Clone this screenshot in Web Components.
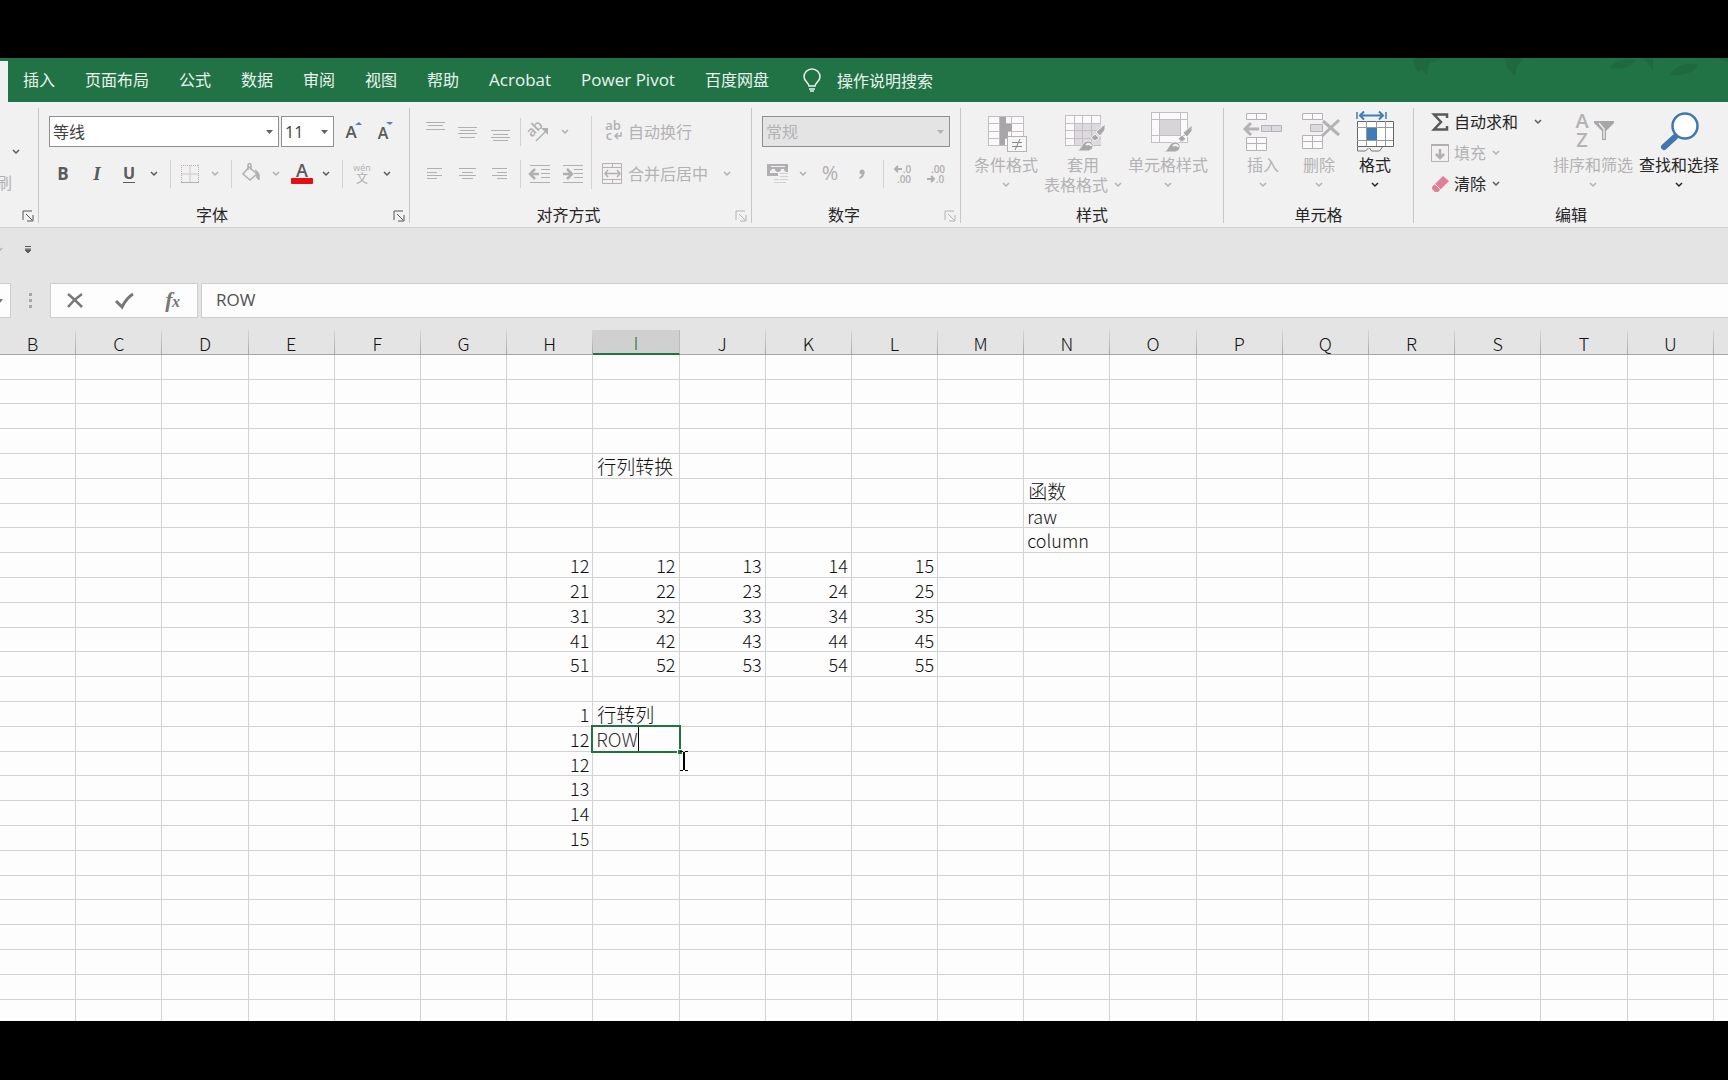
<!DOCTYPE html>
<html lang="zh-CN">
<head>
<meta charset="utf-8">
<title>Excel</title>
<style>
  html, body { height: 100%; }
  body {
    box-sizing: border-box;
    margin: 0;
    padding: 58px 0 59px;
    background: #000;
    display: flex;
    flex-direction: column;
    overflow: hidden;
    color: #262626;
    font: 16px/20px "Open Sans", "Noto Sans CJK SC", sans-serif;
  }
</style>
</head>
<body>
<excel-tabs></excel-tabs>
<excel-ribbon></excel-ribbon>
<quick-bar></quick-bar>
<formula-bar></formula-bar>
<sheet-grid></sheet-grid>

<script>
const svg = (w, h, body) =>
  `<svg width="${w}" height="${h}" viewBox="0 0 ${w} ${h}" overflow="visible" fill="none" stroke="currentColor" aria-hidden="true">${body}</svg>`;
const glyph = (x, y, size, text, extra = '') =>
  `<text x="${x}" y="${y}" font-size="${size}" text-anchor="middle" fill="currentColor" stroke="none" ${extra}>${text}</text>`;

// horizontal strokes given as [x1, x2, y]
const lines = list => `<path d="${list.map(([a, b, y]) => `M${a} ${y}H${b}`).join('')}"/>`;

const brush = `
  <path d="M42 14 33 22l4 4 5-6z" fill="#a8a8a8" stroke="#f1f1f1"/>
  <path d="M32 24l4 4-4 3-4-3z" fill="#a8a8a8" stroke="#f1f1f1"/>
  <path d="M14 41c5-2 5-11 12-10 6 1 5 8 0 10z" fill="#a8a8a8" stroke="#f1f1f1"/>
  <path d="M23 35c2-2 5-1 5 1" stroke="#f1f1f1" stroke-width="2"/>`;

const icons = {
  chev: svg(8, 6, '<path d="M1 1l3 3 3-3" stroke-width="1.500"/>'),
  launcher: svg(12, 12, '<path d="M1 10V1h9M4 4l6 6M11 5v6H5" />'),
  grow: svg(24, 24, glyph(9, 18, 17, 'A', 'font-weight="600"') + '<path d="M13 5h7l-3-3z" fill="#5b7fa8" stroke="none"/>'),
  shrink: svg(24, 24, glyph(8, 19, 16, 'A', 'font-weight="600"') + '<path d="M11 2h7l-3 3z" fill="#5b7fa8" stroke="none"/>'),
  bold: svg(24, 24, glyph(12, 18, 17, 'B', 'font-weight="700"')),
  italic: svg(24, 24, glyph(13, 18, 19, 'I', 'font-weight="700" font-style="italic" font-family="Liberation Serif, serif"')),
  underline: svg(24, 24, glyph(12, 17, 16, 'U', 'font-weight="700"') + '<path d="M6 20.500h12"/>'),
  borders: svg(24, 24, '<path d="M3.500 3v18M20.500 3v18M3 3.500h18" stroke-dasharray="1 1"/><path d="M12 3v18M3 12h18" stroke="#cfc4cb"/><path d="M3 20.500h18"/>'),
  fill: svg(24, 24, '<path d="M10 5l8 7-7 6-7-6zM9 8V3c0-2 3-2 3 0v5" stroke-width="1.500"/><path d="M16 8c4 2 5 5 4 10-1-1-4-3-2-7z" fill="currentColor"/>'),
  fontcolor: svg(24, 24, glyph(13, 15, 18, 'A', 'font-weight="600"') + '<rect x="2" y="16" width="22" height="6" rx="1" fill="#e30f13" stroke="none"/>'),
  pinyin: svg(24, 24, glyph(12, 9, 9, 'wén') + glyph(12, 21, 12, '文')),

  atop: svg(24, 24, lines([[3, 22, 2.5], [5, 20, 5.5], [3, 22, 9.5]])),
  amid: svg(24, 24, lines([[2, 21, 7.5], [4, 19, 10.5], [2, 21, 13.5], [4, 19, 17.5]])),
  abot: svg(24, 24, lines([[2, 21, 10.5], [4, 19, 14.5], [2, 21, 17.5], [4, 19, 20.5]])),
  aleft: svg(24, 24, lines([[4, 19, 6.5], [4, 14, 10.5], [4, 19, 13.5], [4, 14, 16.5]])),
  acenter: svg(24, 24, lines([[3, 20, 6.5], [6, 17, 10.5], [3, 20, 13.5], [6, 17, 16.5]])),
  aright: svg(24, 24, lines([[3, 18, 6.5], [8, 18, 10.5], [3, 18, 13.5], [8, 18, 16.5]])),
  orient: svg(24, 24, `<g transform="rotate(-45 9 11)">${glyph(9, 12, 14, 'ab', 'font-weight="600"')}</g><path d="M8 21 18 11" stroke-width="1.500"/><path d="M13 8h7v7z" fill="currentColor" stroke="none"/>`),
  outdent: svg(24, 24, lines([[2, 22, 3.5], [13, 22, 7.5], [13, 22, 11.5], [13, 22, 15.5], [2, 22, 20.5]]) + '<path d="M11 12H4M7 7l-5 5 5 5" stroke-width="2.500"/>'),
  indent: svg(24, 24, lines([[2, 22, 3.5], [13, 22, 7.5], [13, 22, 11.5], [13, 22, 15.5], [2, 22, 20.5]]) + '<path d="M2 12h7M6 7l5 5-5 5" stroke-width="2.500"/>'),
  wrap: svg(24, 24, glyph(13, 10, 13, 'ab', 'font-weight="600"') + glyph(9, 20, 13, 'c', 'font-weight="600"') + '<path d="M21 12v4h-6m3-3-3 3 3 3" stroke-width="1.500"/>'),
  merge: svg(24, 24, '<path d="M2.500 1.500h19v20h-19zM2 5.500h20M2 17.500h20M12.500 1v4M12.500 18v4" stroke="#b8b0b5"/><path d="M5 11.500h15M8 8l-3 3.500 3 3.500M17 8l3 3.500-3 3.500" stroke-width="1.500"/>'),

  money: svg(24, 24, '<path d="M1 2h21v8h-2a3 3 0 0 1-2-3h-3a3 3 0 0 1-6 0H6a3 3 0 0 1-2 2v2h8v3H1z" fill="currentColor" stroke="none"/><circle cx="12" cy="7" r="2.500" fill="currentColor" stroke="none"/><path d="M5 4.500h14" stroke="#f1f1f1"/><path d="M14 11.500h8M14 14.500h8M14 17.500h8M8 17.500h5M8 20.500h12" stroke-opacity=".5"/>'),
  percent: svg(24, 24, glyph(14, 18, 20, '%')),
  comma: svg(24, 24, '<circle cx="13" cy="10" r="2.500" fill="currentColor" stroke="none"/><path d="M14.500 10c0 3-1 5-4 6" stroke-width="2"/>'),
  incdec: svg(24, 24, glyph(16, 11, 10, '.0', 'font-weight="600"') + glyph(13, 21, 10, '.00', 'font-weight="600"') + '<path d="M11 7H4m3-3L4 7l3 3" stroke-width="2"/>'),
  decdec: svg(24, 24, glyph(14, 11, 10, '.00', 'font-weight="600"') + glyph(16, 21, 10, '.0', 'font-weight="600"') + '<path d="M3 17h7m-3-3 3 3-3 3" stroke-width="2"/>'),

  cond: svg(44, 42, `<g stroke="#c5bcc4"><rect x="4.500" y="4.500" width="35" height="29" fill="#fafafa"/><path d="M4 11.500h36M4 19.500h36M4 26.500h36M15.500 4v29M27.500 4v29"/></g>
    <path d="M16 5h6v7h-6zM16 12h12v7H16zM16 19h8v7h-8zM16 26h5v7h-5z" fill="#a8a6a8" stroke="none"/>
    <rect x="23.500" y="24.500" width="19" height="15" fill="#f6f6f6"/>
    <path d="M28 30.500h10M28 34.500h10M36 27l-5 11" stroke="#888"/>`),
  tablefmt: svg(44, 42, `<g stroke="#c5bcc4"><rect x="4.500" y="3.500" width="35" height="30" fill="#fafafa"/><path d="M13 11h27v22H13z" fill="#dcdade" stroke="none"/><path d="M4 11.500h36M4 18.500h36M4 26.500h36M13.500 3v30M21.500 3v30M30.500 3v30"/></g><g transform="translate(2 -2)">${brush}</g>`),
  cellstyle: svg(44, 42, `<g stroke="#c5bcc4"><rect x="5.500" y=".500" width="36" height="30" fill="#fafafa"/><path d="M13 8h21v15H13z" fill="#d8d5d9" stroke="none"/><path d="M5 7.500h37M5 23.500h37M13.500 0v31M34.500 0v31"/></g><g transform="translate(4 -1)">${brush}</g>`),
  insert: svg(44, 42, `<g stroke="#b9b0b7"><path d="M5.500 1.500h20v6h-20zM15.500 1v7M5.500 25.500h20v13h-20zM5 31.500h21M15.500 25v14" fill="#fafafa"/><path d="M20.500 13.500h20v6h-20zM30.500 13v7" fill="#dcdade"/></g><path d="M18 17H4M10 11l-6 6 6 6" stroke-width="3"/>`),
  remove: svg(44, 42, `<g stroke="#b9b0b7"><path d="M5.500 1.500h20v6h-20zM15.500 1v7M5.500 23.500h20v13h-20zM5 29.500h21M15.500 23v14" fill="#fafafa"/><path d="M13.500 12.500h12v7h-12z" fill="#dcdade"/></g><path d="M26 9l16 14M42 8 25 24" stroke-width="3"/>`),
  format: svg(44, 42, `<g stroke="#3f7cb8"><path d="M4 0v7M33 0v7" stroke-width="1.500"/><path d="M7 3.500h23M11-.500l-4 4 4 4M26-.500l4 4-4 4" stroke-width="2"/></g>
    <path d="M4.500 9.500h36v25h-36z" fill="#fff" stroke="#666"/><path d="M4 15.500h36M4 28.500h36M13.500 9v25M23.500 9v25M32.500 9v25" stroke="#999"/>
    <path d="M14 16h10v12H14z" fill="#3f7cb8" stroke="none"/><path d="M4.500 35v4h8l3-3M16.500 36l2 3h8l3-4" stroke="#777"/>`),

  sum: svg(20, 20, '<path d="M17 6V2.500H4l7 7.500-7 7.500h13V14" stroke-width="2.500"/>'),
  down: svg(20, 20, '<path d="M1.500 1.500h17v17h-17z" stroke="#b9b0b7"/><path d="M1 2h18" stroke-width="2"/><path d="M10 6v9M6 11l4 4 4-4" stroke-width="2.500"/>'),
  eraser: svg(20, 20, '<path d="M2 13 13 2l6 5L8 18H5l-3-3z" fill="#e08098" stroke="none"/><path d="M5 10l6 6" stroke="#f1f1f1"/>'),
  sort: svg(44, 42, glyph(11, 16, 20, 'A', 'font-weight="600"') + glyph(11, 35, 20, 'Z', 'font-weight="600"') + '<path d="M23 9h20v2l-8 8v9h-4v-9l-8-8z" fill="#a8a6a8" stroke="none"/><path d="M28 11l5 6v10" stroke="#ececec" stroke-width="1.500"/>'),
  find: svg(44, 42, '<path d="M18 25 7 35" stroke="#3f78b0" stroke-width="6" stroke-linecap="round"/><circle cx="28" cy="14" r="12.500" fill="#fff" stroke="#3f78b0" stroke-width="2.500"/>'),

  bulb: svg(18, 24, '<path d="M6 17c0-3-5-5-5-9a8 8 0 0 1 16 0c0 4-5 6-5 9zM6 20h6M7 22h4" stroke-width="1.500"/>'),
  custom: svg(8, 10, '<path d="M1 1.500h6M1 4h6"/><path d="M1 5h6L4 8z" fill="currentColor"/>'),
  cancel: svg(18, 16, '<path d="M2 1c5 4 9 8 14 13M16 1C10 5 6 9 2 14" stroke-width="2.500"/>'),
  enter: svg(20, 16, '<path d="M2 8l6 6C11 8 14 4 19 1" stroke-width="3"/>'),
  fx: svg(22, 24, glyph(7, 18, 22, 'f', 'font-style="italic" font-weight="700" font-family="Liberation Serif, serif"') + glyph(14, 18, 16, 'x', 'font-style="italic" font-weight="700" font-family="Liberation Serif, serif"'))
};

// Icon button, with an optional label in its slot
class ToolButton extends HTMLElement {
  connectedCallback() {
    this.attachShadow({ mode: 'open' });
    const off = this.hasAttribute('off') ? 'disabled' : '';
    const label = this.getAttribute('label');
    this.shadowRoot.innerHTML = `
      <style>
        :host { display: block; flex: none; }
        button {
          display: flex;
          align-items: center;
          justify-content: center;
          gap: 4px;
          width: 32px;
          height: 28px;
          padding: 0;
          border: 0;
          background: none;
          font: inherit;
          color: #5a5a5a;
          white-space: nowrap;
        }
        button:disabled { color: #b1afb1; }
        svg { display: block; flex: none; }
        :host([icon="chev"]) button { width: 16px; }
        :host([text]) button { width: auto; }
        span { color: #262626; }
        button:disabled span { color: #b4b2b4; }
      </style>
      <button type="button" ${off} ${label ? `aria-label="${label}"` : ''}>${icons[this.getAttribute('icon')]}${this.hasAttribute('text') ? '<span><slot></slot></span>' : ''}</button>
    `;
  }
}
customElements.define('tool-button', ToolButton);

// Tall ribbon button: picture, caption, then a second line ending in an arrow
class BigButton extends HTMLElement {
  connectedCallback() {
    this.attachShadow({ mode: 'open' });
    const off = this.hasAttribute('off') ? 'disabled' : '';
    this.shadowRoot.innerHTML = `
      <style>
        :host { display: block; flex: none; }
        button {
          display: flex;
          flex-direction: column;
          align-items: center;
          min-width: var(--big-width, 64px);
          padding: 4px 0 0;
          border: 0;
          background: none;
          font: inherit;
          color: #262626;
          white-space: nowrap;
        }
        button:disabled { color: #b4b2b4; }
        svg { display: block; }
        .caption { margin-top: 1px; height: 20px; }
        .more { display: flex; align-items: center; gap: 6px; height: 20px; }
      </style>
      <button type="button" ${off}>
        ${icons[this.getAttribute('icon')]}
        <span class="caption"><slot></slot></span>
        <span class="more"><slot name="second"></slot>${icons.chev}</span>
      </button>
    `;
  }
}
customElements.define('big-button', BigButton);

class DropBox extends HTMLElement {
  connectedCallback() {
    this.attachShadow({ mode: 'open' });
    const off = this.hasAttribute('off') ? 'disabled' : '';
    this.shadowRoot.innerHTML = `
      <style>
        :host { display: grid; align-items: center; height: 31px; }
        select {
          grid-area: 1 / 1;
          appearance: none;
          box-sizing: border-box;
          width: 100%;
          height: 31px;
          padding: 0 3px;
          border: 1px solid #8f8f8f;
          border-radius: 0;
          background: #fff;
          color: #404040;
          font: inherit;
        }
        select:disabled { background: #e4e4e4; color: #b4b2b4; opacity: 1; }
        svg { grid-area: 1 / 1; justify-self: end; margin-right: 6px; color: #606060; pointer-events: none; }
        :host([off]) svg { color: #b4b2b4; }
      </style>
      <select aria-label="${this.getAttribute('label')}" ${off}><option>${this.getAttribute('value')}</option></select>
      <svg width="7" height="4" viewBox="0 0 7 4"><path d="M0 0h7L3.500 4z" fill="currentColor"/></svg>
    `;
  }
}
customElements.define('drop-box', DropBox);

class RibbonGroup extends HTMLElement {
  connectedCallback() {
    this.attachShadow({ mode: 'open' });
    const name = this.getAttribute('name') || '';
    const launcher = this.getAttribute('launcher');
    this.shadowRoot.innerHTML = `
      <style>
        :host {
          display: flex;
          flex-direction: column;
          justify-content: space-between;
          min-width: 0;
          box-sizing: border-box;
          border-right: 1px solid #c6c6c6;
        }
        :host(:last-child) { border-right: 0; }
        footer { display: flex; align-items: center; height: 16px; }
        .name { flex: 1; text-align: center; line-height: 16px; }
        button { width: 24px; padding: 0 0 0 8px; border: 0; background: none; color: #555; display: flex; margin-top: 2px; }
        button:disabled { color: #b4b2b4; }
      </style>
      <slot></slot>
      <footer>
        <span class="name">${name}</span>
        ${launcher ? `<button type="button" aria-label="${name}设置" ${launcher === 'off' ? 'disabled' : ''}>${icons.launcher}</button>` : ''}
      </footer>
    `;
  }
}
customElements.define('ribbon-group', RibbonGroup);

class ExcelTabs extends HTMLElement {
  connectedCallback() {
    this.attachShadow({ mode: 'open' });
    const tabs = ['插入', '页面布局', '公式', '数据', '审阅', '视图', '帮助', 'Acrobat', 'Power Pivot', '百度网盘'];
    this.shadowRoot.innerHTML = `
      <style>
        :host { display: flex; height: 44px; background: #217346; color: #e9f5ee; flex: none; }
        .active { width: 8px; margin-top: 3px; background: #f1f1f1; }
        nav { display: flex; align-items: center; gap: 30px; padding: 0 34px 0 15px; white-space: nowrap; }
        a { color: inherit; text-decoration: none; }
        .latin { font-size: 17px; }
        .search {
          display: flex;
          align-items: center;
          gap: 16px;
          padding: 2px 0 0;
          border: 0;
          background: none;
          color: inherit;
          font: inherit;
          white-space: nowrap;
        }
        .leaves { margin-left: auto; flex: none; }
      </style>
      <div class="active"></div>
      <nav>${tabs.map(t => `<a href="#" class="${/[a-z]/.test(t) ? 'latin' : ''}">${t}</a>`).join('')}</nav>
      <button class="search" type="button">${icons.bulb}<span>操作说明搜索</span></button>
      <svg class="leaves" width="320" height="20" viewBox="0 0 320 20" fill="#1f693f" aria-hidden="true">
        <path d="M5 0h28c-3 5-8 2-12 6l-2 11-5-5-5 2zM96 0h20l-7 8-2 10-8-8zM202 10c6-10 16-7 26-9-3 8-14 11-26 9zM235 0h10v12zM262 17c6-9 16-14 28-10-4 8-14 11-28 10zM310 0h10v4z"/>
      </svg>
    `;
  }
}
customElements.define('excel-tabs', ExcelTabs);

class ExcelRibbon extends HTMLElement {
  connectedCallback() {
    this.attachShadow({ mode: 'open' });
    this.shadowRoot.innerHTML = `
      <style>
        :host {
          display: grid;
          grid-template-columns: 39fr 371fr 342fr 209fr 263fr 190fr 314fr;
          flex: none;
          height: 126px;
          box-sizing: border-box;
          padding: 6px 0 4px;
          background: #f1f1f1;
          border-bottom: 1px solid #cfcfcf;
        }
        .row { display: flex; align-items: center; gap: 1px; height: 31px; }
        .rows { display: flex; flex-direction: column; gap: 11px; padding: 8px 0 0 8px; }
        .block { display: flex; flex-direction: column; gap: 11px; }
        .blocks { display: flex; padding: 8px 0 0 9px; }
        .big { display: flex; gap: 6px; padding-left: 13px; }
        .cells { --big-width: 56px; gap: 0; padding-left: 11px; }
        .stack { display: flex; flex-direction: column; gap: 3px; }
        .stack .row { height: 28px; }
        .stack tool-button { margin-right: 1px; }
        .edit { display: flex; gap: 6px; padding-left: 16px; }
        .sep { width: 1px; height: 28px; background: #d2d2d2; margin: 0 2px 0 var(--sep-before, 2px); }
        .tall { height: auto; margin: 0 8px 0 2px; background: #d2d2d2; width: 1px; }
        .font { --sep-before: 7px; }
        .number { --sep-before: 5px; padding-left: 10px; }
        .face { flex: none; width: 230px; margin-left: 2px; }
        .size { flex: none; width: 53px; margin: 0 3px 0 1px; }
        .format { width: 188px; }
        .clip { display: flex; flex-direction: column; align-items: flex-start; gap: 7px; padding: 30px 0 0 8px; color: #b4b2b4; overflow: hidden; }
        .clip span { margin-left: -12px; }
        .push { margin-left: 10px; }
      </style>

      <ribbon-group launcher="on">
        <div class="clip">
          <tool-button icon="chev" label="粘贴选项"></tool-button>
          <span>刷</span>
        </div>
      </ribbon-group>

      <ribbon-group name="字体" launcher="on">
        <div class="rows font">
          <div class="row">
            <drop-box class="face" label="字体" value="等线"></drop-box>
            <drop-box class="size" label="字号" value="11"></drop-box>
            <tool-button icon="grow" label="增大字号"></tool-button>
            <tool-button icon="shrink" label="减小字号"></tool-button>
          </div>
          <div class="row">
            <tool-button icon="bold" label="加粗"></tool-button>
            <tool-button icon="italic" label="倾斜"></tool-button>
            <tool-button icon="underline" label="下划线"></tool-button>
            <tool-button icon="chev" label="下划线选项"></tool-button>
            <i class="sep"></i>
            <tool-button off icon="borders" label="边框"></tool-button>
            <tool-button off icon="chev" label="边框选项"></tool-button>
            <i class="sep"></i>
            <tool-button off icon="fill" label="填充颜色"></tool-button>
            <tool-button off icon="chev" label="填充颜色选项"></tool-button>
            <tool-button icon="fontcolor" label="字体颜色"></tool-button>
            <tool-button icon="chev" label="字体颜色选项"></tool-button>
            <i class="sep"></i>
            <tool-button off icon="pinyin" label="拼音"></tool-button>
            <tool-button icon="chev" label="拼音选项"></tool-button>
          </div>
        </div>
      </ribbon-group>

      <ribbon-group name="对齐方式" launcher="off">
        <div class="blocks">
          <div class="block">
            <div class="row">
              <tool-button off icon="atop" label="顶端对齐"></tool-button>
              <tool-button off icon="amid" label="垂直居中"></tool-button>
              <tool-button off icon="abot" label="底端对齐"></tool-button>
              <i class="sep"></i>
              <tool-button off icon="orient" label="方向"></tool-button>
              <tool-button off icon="chev" label="方向选项"></tool-button>
            </div>
            <div class="row">
              <tool-button off icon="aleft" label="左对齐"></tool-button>
              <tool-button off icon="acenter" label="居中"></tool-button>
              <tool-button off icon="aright" label="右对齐"></tool-button>
              <i class="sep"></i>
              <tool-button off icon="outdent" label="减少缩进"></tool-button>
              <tool-button off icon="indent" label="增加缩进"></tool-button>
            </div>
          </div>
          <i class="tall"></i>
          <div class="block">
            <div class="row"><tool-button off text icon="wrap">自动换行</tool-button></div>
            <div class="row">
              <tool-button off text icon="merge">合并后居中</tool-button>
              <tool-button off class="push" icon="chev" label="合并选项"></tool-button>
            </div>
          </div>
        </div>
      </ribbon-group>

      <ribbon-group name="数字" launcher="off">
        <div class="rows number">
          <div class="row"><drop-box off class="format" label="数字格式" value="常规"></drop-box></div>
          <div class="row">
            <tool-button off icon="money" label="会计数字格式"></tool-button>
            <tool-button off icon="chev" label="会计格式选项"></tool-button>
            <tool-button off icon="percent" label="百分比样式"></tool-button>
            <tool-button off icon="comma" label="千位分隔样式"></tool-button>
            <i class="sep"></i>
            <tool-button off icon="incdec" label="增加小数位数"></tool-button>
            <tool-button off icon="decdec" label="减少小数位数"></tool-button>
          </div>
        </div>
      </ribbon-group>

      <ribbon-group name="样式">
        <div class="big">
          <big-button off icon="cond">条件格式</big-button>
          <big-button off icon="tablefmt">套用<span slot="second">表格格式</span></big-button>
          <big-button off icon="cellstyle">单元格样式</big-button>
        </div>
      </ribbon-group>

      <ribbon-group name="单元格">
        <div class="big cells">
          <big-button off icon="insert">插入</big-button>
          <big-button off icon="remove">删除</big-button>
          <big-button icon="format">格式</big-button>
        </div>
      </ribbon-group>

      <ribbon-group name="编辑">
        <div class="edit">
          <div class="stack">
            <div class="row">
              <tool-button text icon="sum">自动求和</tool-button>
              <tool-button class="push" icon="chev" label="求和选项"></tool-button>
            </div>
            <div class="row">
              <tool-button off text icon="down">填充</tool-button>
              <tool-button off icon="chev" label="填充选项"></tool-button>
            </div>
            <div class="row">
              <tool-button text icon="eraser">清除</tool-button>
              <tool-button icon="chev" label="清除选项"></tool-button>
            </div>
          </div>
          <big-button off icon="sort">排序和筛选</big-button>
          <big-button icon="find">查找和选择</big-button>
        </div>
      </ribbon-group>
    `;
  }
}
customElements.define('excel-ribbon', ExcelRibbon);

class QuickBar extends HTMLElement {
  connectedCallback() {
    this.attachShadow({ mode: 'open' });
    this.shadowRoot.innerHTML = `
      <style>
        :host { display: flex; align-items: center; flex: none; height: 55px; box-sizing: border-box; padding-bottom: 12px; background: #e4e4e4; overflow: hidden; }
        tool-button { margin-left: -9px; }
        tool-button + tool-button { margin-left: 5px; }
      </style>
      <tool-button off icon="chev" label="恢复选项"></tool-button>
      <tool-button icon="custom" label="自定义快速访问工具栏"></tool-button>
    `;
  }
}
customElements.define('quick-bar', QuickBar);

class FormulaBar extends HTMLElement {
  connectedCallback() {
    this.attachShadow({ mode: 'open' });
    this.shadowRoot.innerHTML = `
      <style>
        :host { display: flex; flex: none; height: 35px; background: #e4e4e4; color: #777; }
        .name, .tools, input { box-sizing: border-box; border: 1px solid #cdcdcd; background: #fdfdfd; }
        .name { width: 11px; border-left: 0; display: flex; align-items: center; }
        .dots { width: 39px; display: flex; align-items: center; justify-content: center; }
        .tools { display: flex; width: 148px; }
        button { flex: 1; display: flex; align-items: center; justify-content: center; padding: 0; border: 0; background: none; color: #777; font: inherit; }
        input {
          flex: 1;
          min-width: 0;
          margin-left: 3px;
          padding: 0 14px 2px;
          border-right: 0;
          border-radius: 0;
          font: inherit;
          font-size: 17px;
          color: #505050;
        }
      </style>
      <div class="name"><svg width="3" height="4" viewBox="0 0 3 4"><path d="M0 0h3L0 4z" fill="#777"/></svg></div>
      <div class="dots"><svg width="3" height="15" viewBox="0 0 3 15" fill="#a6a6a6"><path d="M0 0h3v3H0zM0 6h3v3H0zM0 12h3v3H0z"/></svg></div>
      <div class="tools">
        <button type="button" aria-label="取消">${icons.cancel}</button>
        <button type="button" aria-label="输入">${icons.enter}</button>
        <button type="button" aria-label="插入函数">${icons.fx}</button>
      </div>
      <input aria-label="编辑栏" value="ROW">
    `;
  }
}
customElements.define('formula-bar', FormulaBar);

class SheetGrid extends HTMLElement {
  connectedCallback() {
    this.attachShadow({ mode: 'open' });
    const cols = [...'BCDEFGHIJKLMNOPQRSTU', ''];
    const cells = {
      I5: '行列转换', N6: '函数', N7: 'raw', N8: 'column',
      H15: 1, I15: '行转列', H16: 12, H17: 12, H18: 13, H19: 14, H20: 15
    };
    const block = [
      [12, 12, 13, 14, 15],
      [21, 22, 23, 24, 25],
      [31, 32, 33, 34, 35],
      [41, 42, 43, 44, 45],
      [51, 52, 53, 54, 55]
    ];
    block.forEach((line, r) => line.forEach((v, c) => { cells['HIJKL'[c] + (9 + r)] = v; }));

    const cell = (col, row) => {
      if (col + row === 'I16') return '<td class="editing"><cell-editor value="ROW"></cell-editor></td>';
      const v = cells[col + row];
      if (v === undefined) return '<td></td>';
      if (typeof v === 'number') return `<td class="num">${v}</td>`;
      return `<td class="${/[a-z]/.test(v) ? '' : 'han'}">${v}</td>`;
    };

    let body = '';
    for (let row = 1; row <= 27; row++) {
      body += `<tr>${cols.map(c => cell(c, row)).join('')}</tr>`;
    }

    this.shadowRoot.innerHTML = `
      <style>
        :host {
          display: block;
          flex: 1;
          min-height: 0;
          overflow: hidden;
          padding-top: 12px;
          background: linear-gradient(#e4e4e4 36px, #fdfdfd 36px);
          font: 300 18px/20px "Noto Sans CJK SC", sans-serif;
          color: #111;
        }
        table {
          table-layout: fixed;
          border-collapse: separate;
          border-spacing: 0;
          width: calc(100% + 14px);
          margin-left: -10px;
        }
        col:last-child { width: 18px; }
        th, td { box-sizing: border-box; padding: 0 3px; height: 25px; white-space: nowrap; overflow: hidden; }
        th {
          padding-top: 1px;
          border-bottom: 1px solid #a5a5a5;
          border-right: 1px solid;
          border-image: linear-gradient(#dadada, #a5a5a5) 1;
          border-top: 0;
          border-left: 0;
          font-weight: 300;
        }
        th.current { background: #d0d0d0; color: #217346; border-image: none; border-right-color: #bbb; border-bottom: 2px solid #217346; }
        td { border-right: 1px solid #d2d2d2; border-bottom: 1px solid #d2d2d2; text-align: left; }
        tbody tr:nth-child(5n+2) td { height: 24px; }
        .num { text-align: right; }
        .han { font-size: 19px; padding-left: 4px; }
        .editing { position: relative; overflow: visible; }
      </style>
      <table>
        <colgroup>${cols.map(() => '<col>').join('')}</colgroup>
        <thead><tr>${cols.map(c => `<th class="${c === 'I' ? 'current' : ''}">${c}</th>`).join('')}</tr></thead>
        <tbody>${body}</tbody>
      </table>
    `;
  }
}

// In-cell editor, lies over its cell with the text pointer next to it
class CellEditor extends HTMLElement {
  connectedCallback() {
    this.attachShadow({ mode: 'open' });
    this.shadowRoot.innerHTML = `
      <style>
        :host {
          position: absolute;
          inset: -2px;
          display: flex;
          align-items: stretch;
          box-sizing: border-box;
          padding-left: 3px;
          border: 2px solid #217346;
          background: #fdfdfd;
        }
        input { field-sizing: content; padding: 0; border: 0; background: none; outline: 0; font: inherit; font-size: 19px; color: #333; }
        .caret { width: 1px; background: #000; }
        .handle { position: absolute; right: -3px; bottom: -3px; width: 4px; height: 4px; background: #217346; border: 1px solid #fdfdfd; border-width: 1px 0 0 1px; }
        .pointer { position: absolute; left: 100%; top: 100%; }
      </style>
      <input aria-label="单元格" size="3" value="${this.getAttribute('value')}"><span class="caret"></span>
      <span class="handle"></span>
      <svg class="pointer" width="11" height="22" viewBox="0 0 11 22" fill="none" stroke="#000" aria-hidden="true"><path d="M1 .500h3M6 .500h3M1 19.500h3M6 19.500h3"/><path d="M5 1v18" stroke-width="2"/></svg>
    `;
  }
}
customElements.define('cell-editor', CellEditor);
customElements.define('sheet-grid', SheetGrid);
</script>
</body>
</html>
